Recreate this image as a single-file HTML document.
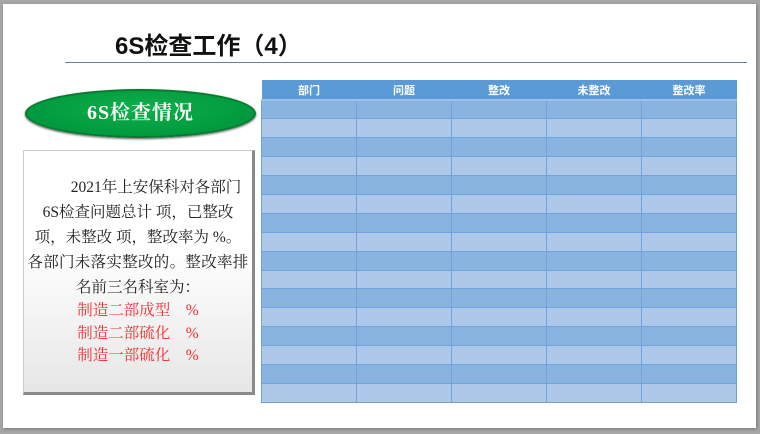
<!DOCTYPE html>
<html><head><meta charset="utf-8"><style>
*{margin:0;padding:0;box-sizing:border-box}
body{width:760px;height:434px;background:#a6a6a6;position:relative;overflow:hidden;font-family:"Liberation Sans","Noto Sans CJK SC",sans-serif}
.slide{position:absolute;left:3px;top:4px;width:753px;height:424px;background:#fff;box-shadow:1px 1px 3px #777}
.title{position:absolute;left:115px;top:26px;font-size:24px;font-weight:bold;color:#111;font-family:"Liberation Sans","Noto Sans CJK SC",sans-serif}
.rule{position:absolute;left:65px;top:62px;width:682px;height:1px;background:#6b7f99}
.ell{position:absolute;left:25px;top:89px;width:231px;height:49px;border-radius:50%;background:radial-gradient(ellipse at 50% 40%,#0fae4a,#009a3e 70%,#008a36);border:2px solid #077a30;box-shadow:0 1px 2px #555;color:#fff;font-family:"Liberation Serif","Noto Serif CJK SC",serif;font-weight:bold;font-size:20px;text-align:center;line-height:45px;letter-spacing:1px}
.box{position:absolute;left:23px;top:150px;width:232px;height:245px;background:linear-gradient(#fff,#fff 40%,#e6e6e6);border:1px solid #ccc;border-right:3px solid #8a8a8a;border-bottom:3px solid #8a8a8a;font-family:"Liberation Serif","Noto Serif CJK SC",serif;font-size:15.5px;color:#222;text-align:center;line-height:25px;padding-top:24px;white-space:nowrap}
.red{color:#f03030;line-height:22.5px}
table{position:absolute;left:261px;top:80px;border-collapse:collapse;width:475px;table-layout:fixed}
th{background:#5b9bd5;color:#fff;font-size:11px;height:20px;font-weight:bold;border-bottom:2px solid #9cc0e8}
td{height:18.9px;border:1px solid #6fa3dc;border-top:none;border-bottom:1px solid #6fa3dc}
tr.a td{background:#8ab4e0}
tr.b td{background:#adc8e8}
</style></head><body>
<div class="slide"></div>
<div class="title">6S检查工作（4）</div>
<div class="rule"></div>
<div class="ell">6S检查情况</div>
<div class="box">
<div style="padding-left:36px">2021年上安保科对各部门</div>
<div>6S检查问题总计 项，已整改</div>
<div>项，未整改 项，整改率为 %。</div>
<div style="letter-spacing:0.3px">各部门未落实整改的。整改率排</div>
<div>名前三名科室为：</div>
<div class="red">制造二部成型 &nbsp;&nbsp; %</div>
<div class="red">制造二部硫化 &nbsp;&nbsp; %</div>
<div class="red">制造一部硫化 &nbsp;&nbsp; %</div>
</div>
<table>
<colgroup><col style="width:95px"><col style="width:95px"><col style="width:95px"><col style="width:95px"><col style="width:95px"></colgroup>
<tr><th>部门</th><th>问题</th><th>整改</th><th>未整改</th><th>整改率</th></tr>
<tr class="a"><td></td><td></td><td></td><td></td><td></td></tr>
<tr class="b"><td></td><td></td><td></td><td></td><td></td></tr>
<tr class="a"><td></td><td></td><td></td><td></td><td></td></tr>
<tr class="b"><td></td><td></td><td></td><td></td><td></td></tr>
<tr class="a"><td></td><td></td><td></td><td></td><td></td></tr>
<tr class="b"><td></td><td></td><td></td><td></td><td></td></tr>
<tr class="a"><td></td><td></td><td></td><td></td><td></td></tr>
<tr class="b"><td></td><td></td><td></td><td></td><td></td></tr>
<tr class="a"><td></td><td></td><td></td><td></td><td></td></tr>
<tr class="b"><td></td><td></td><td></td><td></td><td></td></tr>
<tr class="a"><td></td><td></td><td></td><td></td><td></td></tr>
<tr class="b"><td></td><td></td><td></td><td></td><td></td></tr>
<tr class="a"><td></td><td></td><td></td><td></td><td></td></tr>
<tr class="b"><td></td><td></td><td></td><td></td><td></td></tr>
<tr class="a"><td></td><td></td><td></td><td></td><td></td></tr>
<tr class="b"><td></td><td></td><td></td><td></td><td></td></tr>
</table>
</body></html>
